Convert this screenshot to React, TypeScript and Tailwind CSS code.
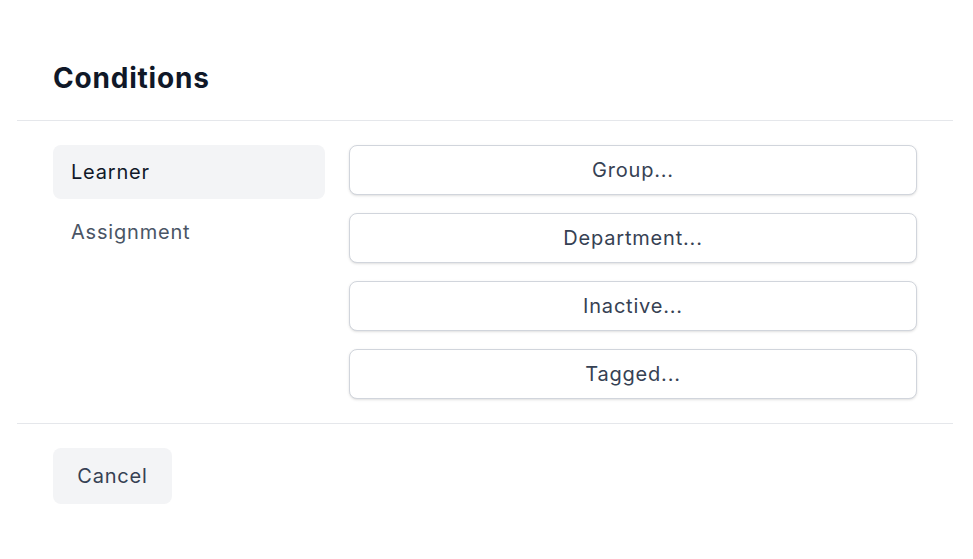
import React from "react";

export default function App() {
  const buttons = ["Group...", "Department...", "Inactive...", "Tagged..."];
  return (
    <div className="min-h-[559px] w-[973px] bg-white font-['Inter',sans-serif] tracking-[0.8px]">
      <div className="ml-[17px] w-[936px]">
        <div className="px-[36px] pt-[60px] pb-[24px] border-b border-gray-200">
          <h1 className="text-[28px] leading-[36px] font-bold text-gray-900">Conditions</h1>
        </div>
        <div className="flex gap-[24px] px-[36px] py-[24px] border-b border-gray-200">
          <div className="w-[272px] flex flex-col gap-[6px]">
            <div className="h-[54px] flex items-center px-[18px] rounded-lg bg-gray-100 text-[20px] text-gray-900">Learner</div>
            <div className="h-[54px] flex items-center px-[18px] rounded-lg text-[20px] text-gray-600">Assignment</div>
          </div>
          <div className="w-[568px] flex flex-col gap-[18px]">
            {buttons.map((b) => (
              <button
                key={b}
                className="h-[50px] w-full rounded-lg border border-gray-300 bg-white shadow-sm text-[20px] text-gray-700 flex items-center justify-center"
              >
                {b}
              </button>
            ))}
          </div>
        </div>
        <div className="px-[36px] pt-[24px]">
          <button className="h-[56px] w-[119px] rounded-lg bg-gray-100 text-[20px] text-gray-700">Cancel</button>
        </div>
      </div>
    </div>
  );
}
